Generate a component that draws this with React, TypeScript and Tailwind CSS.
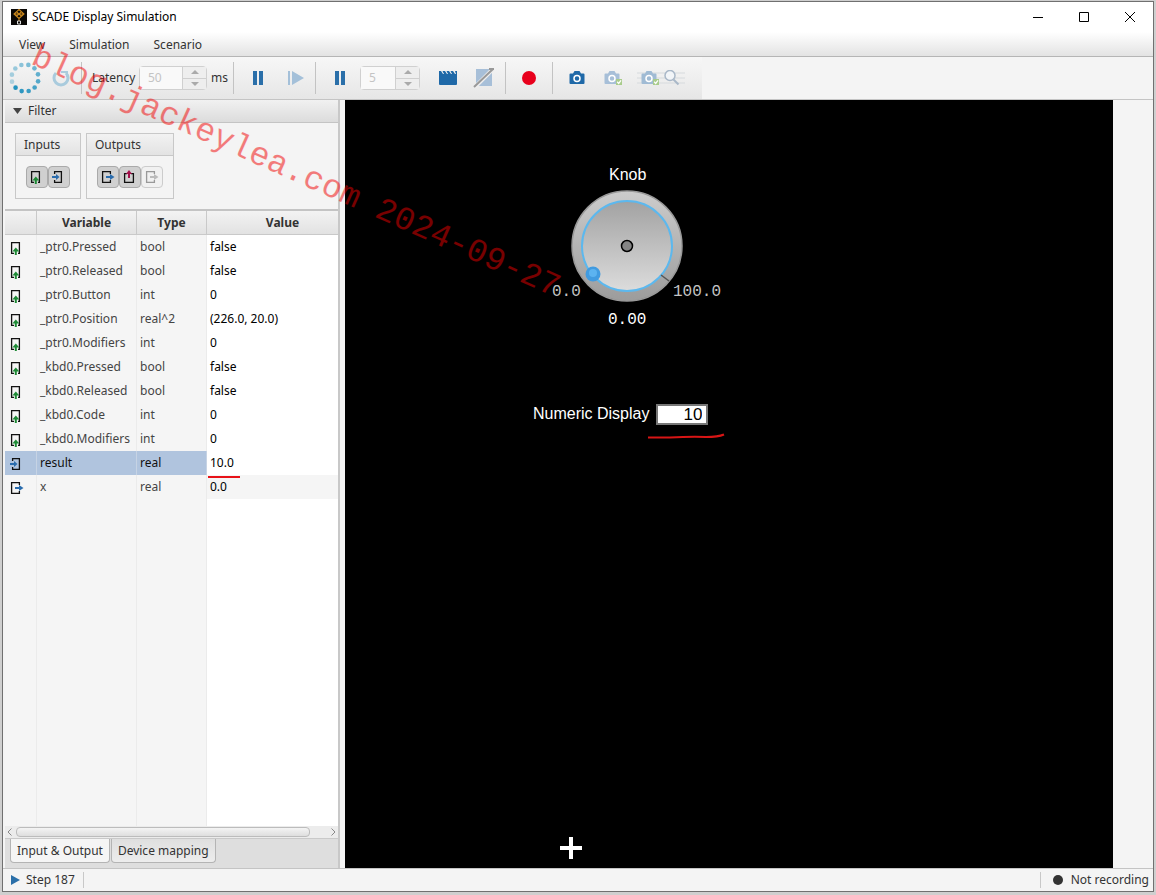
import React, { useState } from "react";

type Kind = "key" | "input" | "output" | "probe" | "disabled";

const variables: { kind: Kind; name: string; type: string; value: string }[] = [
  { kind: "key", name: "_ptr0.Pressed", type: "bool", value: "false" },
  { kind: "key", name: "_ptr0.Released", type: "bool", value: "false" },
  { kind: "key", name: "_ptr0.Button", type: "int", value: "0" },
  { kind: "key", name: "_ptr0.Position", type: "real^2", value: "(226.0, 20.0)" },
  { kind: "key", name: "_ptr0.Modifiers", type: "int", value: "0" },
  { kind: "key", name: "_kbd0.Pressed", type: "bool", value: "false" },
  { kind: "key", name: "_kbd0.Released", type: "bool", value: "false" },
  { kind: "key", name: "_kbd0.Code", type: "int", value: "0" },
  { kind: "key", name: "_kbd0.Modifiers", type: "int", value: "0" },
  { kind: "input", name: "result", type: "real", value: "10.0" },
  { kind: "output", name: "x", type: "real", value: "0.0" },
];

function PortIcon({ kind }: { kind: Kind }) {
  return (
    <svg width="14" height="14" viewBox="0 0 14 14" fill="none" strokeWidth="1.3">
      {kind === "key" && (
        <>
          <path d="M4 12.4H1.6V1.6h7.8v10.8H8" stroke="#111" />
          <path d="M5.8 14V8.500" stroke="#1d8a35" strokeWidth="2" />
          <path d="M2.300 10.500 5.800 6.500l3.500 4z" fill="#1d8a35" />
        </>
      )}
      {kind === "input" && (
        <>
          <path d="M2.600 4V1.600h6.800v10.800H2.600V10" stroke="#111" />
          <path d="M0 7h5" stroke="#2a6cad" strokeWidth="2" />
          <path d="M4 4l3.500 3L4 10z" fill="#2a6cad" />
        </>
      )}
      {(kind === "output" || kind === "disabled") && (
        <>
          <path d="M9.400 4V1.600H1.600v10.800h7.800V10" stroke={kind === "output" ? "#111" : "#999"} />
          <path d="M5 7h5" stroke={kind === "output" ? "#2a6cad" : "#bbb"} strokeWidth="2" />
          <path d="M9 4l4.500 3L9 10z" fill={kind === "output" ? "#2a6cad" : "#bbb"} />
        </>
      )}
      {kind === "probe" && (
        <>
          <path d="M4 3.600H1.600v8.800h8.800V3.600H8" stroke="#111" />
          <path d="M6 8V3" stroke="#a5114c" strokeWidth="2" />
          <path d="M3 4l3-4 3 4z" fill="#a5114c" />
        </>
      )}
    </svg>
  );
}

function AppIcon() {
  return (
    <svg width="16" height="16" viewBox="0 0 16 16">
      <rect width="16" height="16" fill="#0a0806" />
      <path d="M8 0.500l5 4.500-5 4.500L3 5zM5.500 2.700l5 4.600M10.500 2.700l-5 4.600M3 5h10M8 9.500V12" fill="none" stroke="#c8861c" strokeWidth="1.100" />
      <path d="M6.500 12h3v3h-3z" fill="none" stroke="#ddd" />
    </svg>
  );
}

function Spinner() {
  const dots = Array.from({ length: 12 }, (_, i) => {
    const a = (i * Math.PI) / 6 + 0.25;
    return { x: 16 + 13.5 * Math.sin(a), y: 16 - 13.5 * Math.cos(a), o: 0.55 + i * 0.06 };
  });
  return (
    <svg width="32" height="32" viewBox="0 0 32 32" className="shrink-0">
      {dots.map((d, i) => (
        <circle key={i} cx={d.x} cy={d.y} r="2.300" fill="#1b8fbd" opacity={i > 7 ? 0.3 + (i - 8) * 0.06 : Math.min(d.o, 1)} />
      ))}
    </svg>
  );
}

function Pause() {
  return (
    <svg width="10" height="16" viewBox="0 0 10 16" fill="#2a6fa9">
      <path d="M0 1h4v14H0zM6 1h4v14H6z" />
    </svg>
  );
}

function CameraShape({ color }: { color: string }) {
  return (
    <>
      <path d="M1.500 3.500H4L5.500 1h5L12 3.500h2.500q1 0 1 1V13q0 1-1 1h-13q-1 0-1-1V4.500q0-1 1-1z" fill={color} />
      <circle cx="8" cy="8.500" r="3" fill="none" stroke="#fff" strokeWidth="1.500" />
    </>
  );
}

function CheckBadge() {
  return (
    <>
      <path d="M12 9h6v6h-6z" fill="#a9cc8c" />
      <path d="M13.200 11.800l1.500 1.600 2.300-3" fill="none" stroke="#fff" strokeWidth="1.300" />
    </>
  );
}

function Spin({ label, value, wide }: { label: string; value: string; wide?: boolean }) {
  return (
    <div className={wide ? "flex h-6 w-[68px] rounded-sm border border-[#d0d0d0]" : "flex h-6 w-[60px] rounded-sm border border-[#d0d0d0]"}>
      <input
        aria-label={label}
        disabled
        defaultValue={value}
        className="w-0 flex-1 bg-[#f9f9f9] px-2 text-xs text-[#c4c4c4]"
      />
      <div className="flex w-6 flex-col divide-y divide-[#cfcfcf] border-l border-[#d0d0d0] bg-[#eeeeee]">
        <button disabled aria-label={`Increase ${label}`} className="flex flex-1 items-center justify-center">
          <svg width="8" height="4" viewBox="0 0 8 4"><path d="M0 4l4-4 4 4z" fill="#aaa" /></svg>
        </button>
        <button disabled aria-label={`Decrease ${label}`} className="flex flex-1 items-center justify-center">
          <svg width="8" height="4" viewBox="0 0 8 4"><path d="M0 0l4 4 4-4z" fill="#aaa" /></svg>
        </button>
      </div>
    </div>
  );
}

function Divider() {
  return <div className="h-8 w-px shrink-0 bg-[#c3c3c3]" />;
}

function ToolButton({ label, children }: { label: string; children: React.ReactNode }) {
  return (
    <button aria-label={label} className="flex h-6 w-6 shrink-0 items-center justify-center">
      {children}
    </button>
  );
}

function Toolbar() {
  return (
    <div className="flex h-[43px] border-b border-[#c4c4c4] bg-[#f4f4f4]">
      <div className="flex w-[699px] items-center bg-gradient-to-b from-[#f7f7f7] to-[#e6e6e6] pl-1.5">
        <Spinner />
        <div className="ml-2">
          <ToolButton label="Reset">
            <svg width="20" height="20" viewBox="0 0 20 20" fill="none" stroke="#a9cbdd" strokeWidth="3">
              <path d="M5 5a7 7 0 1 0 10 0" />
              <path d="M10 4h6v5" strokeWidth="2" />
            </svg>
          </ToolButton>
        </div>
        <div className="ml-2"><Divider /></div>
        <span className="ml-2.5 w-[47px] text-xs">Latency</span>
        <Spin label="Latency" value="50" wide />
        <span className="ml-1 w-[22px] text-xs">ms</span>
        <Divider />
        <div className="ml-3 flex w-[69px] gap-3.5">
          <ToolButton label="Pause"><Pause /></ToolButton>
          <ToolButton label="Step">
            <svg width="18" height="16" viewBox="0 0 18 16" fill="#a4c0d9">
              <path d="M1 1h2v14H1zM5 1l12 7-12 7z" />
            </svg>
          </ToolButton>
        </div>
        <Divider />
        <div className="mx-3 flex items-center gap-2">
          <ToolButton label="Pause refresh"><Pause /></ToolButton>
          <Spin label="Refresh rate" value="5" />
        </div>
        <div className="flex w-[73px] gap-3 pl-1">
          <ToolButton label="Scenario">
            <svg width="18" height="16" viewBox="0 0 18 16" fill="#1f69a8">
              <path d="M0 1h2l2 3h1L3.500 1H6l2 3h1L7.500 1H10l2 3h1l-1.500-3H14l2 3h1l-1-3h2v13q0 1-1 1H1q-1 0-1-1z" />
            </svg>
          </ToolButton>
          <ToolButton label="Disable display">
            <svg width="22" height="20" viewBox="0 0 22 20">
              <path d="M3 1h16v17H3z" fill="#a7bfd8" />
              <path d="M2 19L20 1" stroke="#eee" strokeWidth="4" />
              <path d="M1 19L20 1M16 1h5" stroke="#999" strokeWidth="2" />
            </svg>
          </ToolButton>
        </div>
        <Divider />
        <div className="mx-[11px]">
          <ToolButton label="Record">
            <span className="h-3.5 w-3.5 rounded-full bg-[#e8001c]" />
          </ToolButton>
        </div>
        <Divider />
        <div className="ml-3 flex gap-3">
          <ToolButton label="Snapshot">
            <svg width="16" height="16" viewBox="0 0 16 16"><CameraShape color="#1f69a8" /></svg>
          </ToolButton>
          <ToolButton label="Save snapshot">
            <svg width="18" height="16" viewBox="0 0 18 16"><CameraShape color="#a7bfd8" /><CheckBadge /></svg>
          </ToolButton>
          <button aria-label="Compare snapshots" className="flex h-6 items-center">
            <svg width="48" height="16" viewBox="0 0 48 16">
              <path d="M0 3h48M0 8h48M0 13h48" stroke="#d6dadd" />
              <g transform="translate(4 0)"><CameraShape color="#a0bbd4" /><CheckBadge /></g>
              <circle cx="33" cy="5.500" r="5" fill="#f2f5f8" stroke="#a9b8c8" strokeWidth="1.500" />
              <path d="M36.500 9.500l5 5" stroke="#a9b8c8" strokeWidth="2" />
            </svg>
          </button>
        </div>
      </div>
    </div>
  );
}

function FilterGroup({ title, kinds }: { title: string; kinds: Kind[] }) {
  return (
    <fieldset className="h-[66px] border border-[#c8c8c8] bg-[#f4f4f4]">
      <div className="h-[22px] border-b border-[#c8c8c8] bg-gradient-to-b from-[#f2f2f2] to-[#e3e3e3] px-2 text-xs leading-[22px]">
        {title}
      </div>
      <div className="flex px-2.5 pt-2.5">
        {kinds.map((k) => (
          <button
            key={k}
            aria-label={`${title} ${k}`}
            disabled={k === "disabled"}
            className="flex h-[22px] w-[22px] items-center justify-center rounded-sm border border-[#aaa] bg-[#d0d0d0] disabled:border-[#ccc] disabled:bg-[#f1f1f1]"
          >
            <PortIcon kind={k} />
          </button>
        ))}
      </div>
    </fieldset>
  );
}

function VariableTable() {
  const [selected, setSelected] = useState("result");
  const head = "border-r border-b border-[#c9c9c9] bg-gradient-to-b from-[#f3f3f3] to-[#e2e2e2] font-bold";

  return (
    <div className="flex flex-1 flex-col border-t-2 border-[#c4c4c4] text-xs">
      <table className="w-full table-fixed border-separate border-spacing-0 text-left">
        <colgroup>
          <col className="w-8" />
          <col className="w-[100px]" />
          <col className="w-[70px]" />
          <col />
        </colgroup>
        <thead>
          <tr className="h-6 text-center">
            <th className={head} aria-label="Kind"></th>
            <th className={head}>Variable</th>
            <th className={head}>Type</th>
            <th className="border-b border-[#c9c9c9] bg-gradient-to-b from-[#f3f3f3] to-[#e2e2e2] pl-5 font-bold">Value</th>
          </tr>
        </thead>
        <tbody>
          {variables.map((v) => {
            const cell =
              v.name === selected
                ? "border-r border-[#c6d3e4] bg-[#b0c4de] text-[#111] whitespace-nowrap"
                : "border-r border-[#ebebeb] bg-[#f5f5f5] text-[#444] whitespace-nowrap";
            return (
              <tr key={v.name} className="h-6" onClick={() => setSelected(v.name)}>
                <td className={cell}>
                  <div className="pt-px pl-[5px]"><PortIcon kind={v.kind} /></div>
                </td>
                <td className={cell}><div className="pl-[3px]">{v.name}</div></td>
                <td className={cell}><div className="pl-[3px]">{v.type}</div></td>
                <td className={v.name === "x" ? "bg-[#f5f5f5] text-black" : "bg-white text-black"}>
                  <div className="relative pl-[3px]">
                    {v.value}
                    {v.name === "result" && <span className="absolute top-[21px] left-px h-0.5 w-8 bg-[#e81218]" />}
                  </div>
                </td>
              </tr>
            );
          })}
        </tbody>
      </table>
      <div className="flex flex-1 bg-white">
        <div className="w-8 border-r border-[#ebebeb] bg-[#f5f5f5]" />
        <div className="w-[100px] border-r border-[#ebebeb] bg-[#f5f5f5]" />
        <div className="w-[70px] border-r border-[#ebebeb] bg-[#f5f5f5]" />
      </div>
      <div className="flex h-3 items-center gap-1 bg-[#ececec] px-0.5">
        <svg width="5" height="8" viewBox="0 0 5 8" fill="none" stroke="#888"><path d="M4.500 0.500L1 4l3.500 3.500" /></svg>
        <div className="flex-1">
          <div className="h-2.5 w-[294px] rounded-sm border border-[#bcbcbc] bg-gradient-to-b from-[#f4f4f4] to-[#dedede]" />
        </div>
        <svg width="5" height="8" viewBox="0 0 5 8" fill="none" stroke="#888"><path d="M0.500 0.500L4 4 0.500 7.500" /></svg>
      </div>
    </div>
  );
}

function SidePanel() {
  const [open, setOpen] = useState(true);
  const [tab, setTab] = useState("Input & Output");

  return (
    <aside className="mr-[5px] ml-0.5 flex w-[335px] shrink-0 flex-col border-r-2 border-[#c8c8c8]">
      <button
        onClick={() => setOpen(!open)}
        className="flex h-[23px] items-center gap-1.5 border-b border-[#c4c4c4] bg-gradient-to-b from-[#f1f1f1] to-[#dcdcdc] px-2 text-xs"
      >
        <svg width="9" height="6" viewBox="0 0 9 6" fill="#444"><path d="M0 0h9L4.500 6z" /></svg>
        Filter
      </button>
      {open && (
        <div className="flex gap-[5px] px-2.5 pt-2.5 pb-2.5">
          <FilterGroup title="Inputs" kinds={["key", "input"]} />
          <FilterGroup title="Outputs" kinds={["output", "probe", "disabled"]} />
        </div>
      )}
      <VariableTable />
      <div className="flex h-[30px] gap-px border-t border-[#c9c9c9] bg-[#dedede] px-[5px] pb-[5px]">
        {["Input & Output", "Device mapping"].map((t) => (
          <button
            key={t}
            onClick={() => setTab(t)}
            className={
              t === tab
                ? "rounded-b-sm border-x border-b border-[#b4b4b4] bg-[#f5f5f5] px-1.5 text-xs whitespace-nowrap"
                : "rounded-b-sm border-x border-b border-[#b4b4b4] bg-gradient-to-b from-[#dfdfdf] to-[#ededed] px-1.5 text-xs whitespace-nowrap"
            }
          >
            {t}
          </button>
        ))}
      </div>
    </aside>
  );
}

function Display() {
  return (
    <main className="relative mr-10 min-h-[768px] flex-1 overflow-hidden bg-black font-['Liberation_Sans'] text-base leading-5 text-white">
      <span className="absolute top-[65px] left-[264px]">Knob</span>
      <svg className="absolute top-[90px] left-[226px]" width="112" height="112" viewBox="0 0 112 112">
        <defs>
          <linearGradient id="rim" x1="0" y1="0" x2="0" y2="1">
            <stop offset="0" stopColor="#ccc" />
            <stop offset="1" stopColor="#9c9c9c" />
          </linearGradient>
          <linearGradient id="face" x1="0" y1="0" x2="0" y2="1">
            <stop offset="0" stopColor="#a2a2a2" />
            <stop offset="1" stopColor="#dcdcdc" />
          </linearGradient>
        </defs>
        <circle cx="56" cy="56" r="55" fill="url(#rim)" stroke="#999" strokeWidth="1.500" />
        <circle cx="56" cy="56" r="45" fill="url(#face)" stroke="#5cb8ee" strokeWidth="2" />
        <circle cx="56" cy="56" r="5.500" fill="#858585" stroke="#000" strokeWidth="1.500" />
        <path d="M90 85l8 6" stroke="#555" strokeWidth="1.500" />
        <circle cx="22" cy="84" r="7.500" fill="#419be0" />
        <circle cx="22" cy="83" r="4" fill="#5cb3f0" />
      </svg>
      <div className="font-['Liberation_Mono']">
        <span className="absolute top-[182px] left-[207px] text-[#c4c4c4]">0.0</span>
        <span className="absolute top-[182px] left-[328px] text-[#c4c4c4]">100.0</span>
        <span className="absolute top-[210px] left-[263px]">0.00</span>
      </div>
      <div className="absolute top-[304px] left-[188px] flex items-start gap-[7px]">
        <label htmlFor="numeric">Numeric Display</label>
        <input
          id="numeric"
          readOnly
          value="10"
          className="h-[21px] w-[52px] border-2 border-[#777] bg-white pr-1 text-right text-[17px] text-black"
        />
      </div>
      <svg className="absolute top-[333px] left-[303px]" width="78" height="7" viewBox="0 0 78 7" fill="none">
        <path d="M0 4.500h22q20-1 36-.5 12 0 18-2.500" stroke="#d81515" strokeWidth="2" />
      </svg>
      <svg className="absolute top-[737px] left-[215px]" width="22" height="22" viewBox="0 0 22 22">
        <path d="M11 0v22M0 11h22" stroke="#fff" strokeWidth="4" />
      </svg>
    </main>
  );
}

export default function App() {
  return (
    <div className="relative flex min-h-screen flex-col overflow-hidden bg-[#cfcfcf] pt-px pr-0.5 pb-[3px] pl-0.5 font-['Noto_Sans','Open_Sans',sans-serif] text-[#333]">
      <div className="flex flex-1 flex-col border border-[#707070] bg-[#f4f4f4]">
        <header className="bg-white">
          <div className="flex h-[30px] items-center pl-2">
            <AppIcon />
            <h1 className="ml-[5px] flex-1 text-xs text-black">SCADE Display Simulation</h1>
            <div className="flex">
              <button aria-label="Minimize" className="flex h-[30px] w-[46px] items-center justify-center">
                <svg width="10" height="10" viewBox="0 0 10 10"><path d="M0 5.500h10" stroke="#000" /></svg>
              </button>
              <button aria-label="Maximize" className="flex h-[30px] w-[46px] items-center justify-center">
                <svg width="10" height="10" viewBox="0 0 10 10"><path d="M0.500 0.500h9v9h-9z" fill="none" stroke="#000" /></svg>
              </button>
              <button aria-label="Close" className="flex h-[30px] w-[46px] items-center justify-center">
                <svg width="10" height="10" viewBox="0 0 10 10"><path d="M0 0l10 10M10 0L0 10" stroke="#000" /></svg>
              </button>
            </div>
          </div>
          <nav className="flex h-[25px] items-center gap-6 border-b border-[#b5b5b5] bg-gradient-to-b from-white to-[#e3e3e3] px-4 pt-px text-xs">
            <button>View</button>
            <button>Simulation</button>
            <button>Scenario</button>
          </nav>
        </header>
        <Toolbar />
        <div className="flex flex-1">
          <SidePanel />
          <Display />
        </div>
        <footer className="flex h-[23px] items-center justify-between border-t border-[#c4c4c4] pr-1 pl-2 text-xs">
          <div className="flex h-4 items-center gap-1.5 border-r border-[#c8c8c8] pr-2">
            <svg width="9" height="10" viewBox="0 0 9 10" fill="#2a6fa9"><path d="M0 0l9 5-9 5z" /></svg>
            Step 187
          </div>
          <div className="flex h-4 items-center gap-2 border-l border-[#c8c8c8] pl-3">
            <span className="h-2.5 w-2.5 rounded-full bg-[#333]" />
            Not recording
          </div>
        </footer>
      </div>
      <div className="pointer-events-none absolute top-[38px] left-[33px] origin-left rotate-[24deg] font-['Liberation_Mono'] text-[33px] leading-9 whitespace-nowrap text-[#f00000]/50">
        blog.jackeylea.com 2024-09-27
      </div>
    </div>
  );
}
